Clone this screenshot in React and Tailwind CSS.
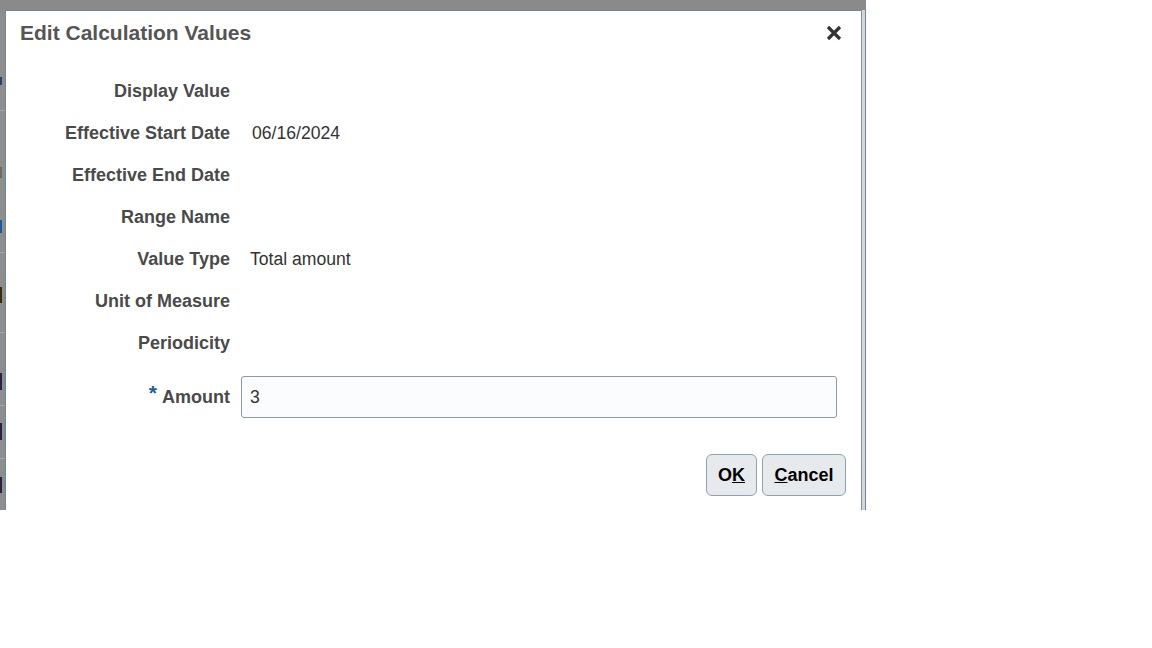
import { useState } from "react";

const ROWS = [
  { label: "Display Value", value: "" },
  { label: "Effective Start Date", value: "06/16/2024", pad: "pl-[22px]" },
  { label: "Effective End Date", value: "" },
  { label: "Range Name", value: "" },
  { label: "Value Type", value: "Total amount", pad: "pl-[20px]" },
  { label: "Unit of Measure", value: "" },
  { label: "Periodicity", value: "" },
];

// slivers of the page behind the dialog that show on the left edge
const MARKS = [
  "top-[67px] h-[8px] bg-[#2a4468]",
  "top-[157px] h-[11px] bg-[#6c6a60]",
  "top-[210px] h-[13px] bg-[#1e5a94]",
  "top-[277px] h-[16px] bg-[#3a2a10]",
  "top-[363px] h-[17px] bg-[#2a2040]",
  "top-[413px] h-[17px] bg-[#2a2040]",
  "top-[467px] h-[16px] bg-[#2a2040]",
];
const LINES = ["top-[100px]", "top-[242px]", "top-[322px]", "top-[395px]", "top-[448px]"];

export default function App() {
  const [amount, setAmount] = useState("3");

  return (
    <div className="h-[648px] w-[1152px] bg-white" style={{ fontFamily: '"Liberation Sans", Arial, sans-serif' }}>
      <div className="flex h-[510px] w-[866px] flex-col bg-[#8b8b8b]">
        {/* top gray band */}
        <div className="h-[10px] shrink-0 bg-[#8a8a8a]" />
        <div className="flex min-h-0 flex-1">
          {/* left strip */}
          <div className="relative w-[5px] shrink-0 overflow-hidden bg-[#8d8d8d]">
            {LINES.map((l) => (
              <div key={l} className={`absolute left-0 h-[1px] w-[5px] bg-[#a4a4a4] ${l}`} />
            ))}
            {MARKS.map((m) => (
              <div key={m} className={`absolute left-0 w-[2px] ${m}`} />
            ))}
          </div>

          {/* dialog */}
          <div className="flex min-w-0 flex-1 flex-col border-t border-l border-[#6f879a] bg-white">
            <div className="flex h-[44px] shrink-0 items-center justify-between pr-[18px] pl-[14px]">
              <h1 className="text-[21px] font-bold text-[#555555]">Edit Calculation Values</h1>
              <button type="button" className="flex h-[18px] w-[18px] items-center justify-center">
                <svg width="16" height="16" viewBox="0 0 16 16">
                  <path d="M2 2 L14 14 M14 2 L2 14" stroke="#333333" strokeWidth="3.2" strokeLinecap="butt" />
                </svg>
              </button>
            </div>

            <div className="mt-[15px] flex flex-col">
              {ROWS.map((r) => (
                <div key={r.label} className="grid h-[42px] grid-cols-[224px_1fr] items-center">
                  <div className="text-right text-[18px] font-bold text-[#4a4a4a]">{r.label}</div>
                  <div className={`text-[17.6px] text-[#333333] ${r.pad ?? "pl-[20px]"}`}>{r.value}</div>
                </div>
              ))}

              <div className="mt-[12px] grid h-[42px] grid-cols-[224px_1fr] items-center">
                <div className="flex items-center justify-end gap-[5px]">
                  <span className="-mt-[8px] text-[21px] font-bold text-[#1b5c9c]">*</span>
                  <span className="text-[18px] font-bold text-[#4a4a4a]">Amount</span>
                </div>
                <div className="pr-[24px] pl-[11px]">
                  <input
                    value={amount}
                    onChange={(e) => setAmount(e.target.value)}
                    className="h-[42px] w-full rounded-[3px] border border-[#8a9baa] bg-[#fbfcfd] px-[8px] text-[17.6px] text-[#333333] outline-none"
                  />
                </div>
              </div>
            </div>

            <div className="mt-[36px] flex justify-end gap-[5px] pr-[15px]">
              <button
                type="button"
                className="h-[42px] w-[51px] rounded-[6px] border border-[#8ea2b1] bg-[#e6eaed] text-[18px] font-bold text-black"
              >
                O<span className="underline">K</span>
              </button>
              <button
                type="button"
                className="h-[42px] w-[84px] rounded-[6px] border border-[#8ea2b1] bg-[#e6eaed] text-[18px] font-bold text-black"
              >
                <span className="underline">C</span>ancel
              </button>
            </div>
          </div>

          {/* right edge */}
          <div className="flex w-[5px] shrink-0 bg-white">
            <div className="w-[1px] bg-[#7c90a0]" />
            <div className="w-[3px] bg-[#d4d7da]" />
            <div className="w-[1px] bg-[#6f879a]" />
          </div>
        </div>
      </div>
    </div>
  );
}
